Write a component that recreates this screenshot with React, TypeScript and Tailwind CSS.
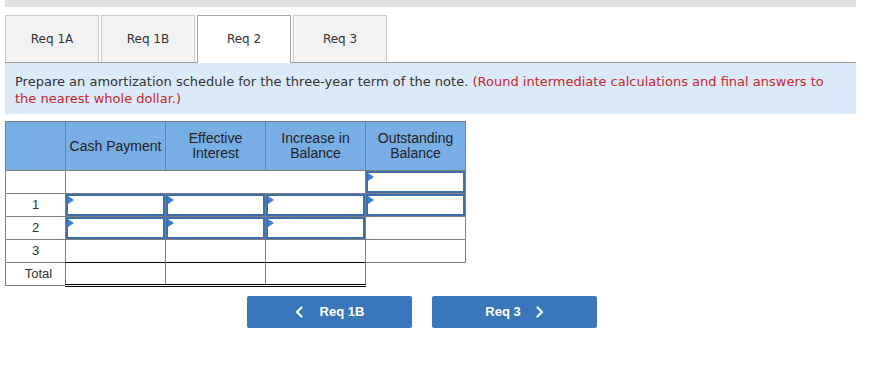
import React from "react";

const tabs = ["Req 1A", "Req 1B", "Req 2", "Req 3"];
const active = "Req 2";

// small blue marker in the corner of an entry cell
const Marker = () => (
  <span className="absolute left-0 top-0 h-0 w-0 border-y-[4px] border-l-[6px] border-y-transparent border-l-[#3b7fd6]" />
);

const InputCell = () => (
  <td className="h-[23px] border border-[#808080] p-0">
    <div className="relative h-[22px] border-2 border-[#3f6ea8] bg-white">
      <Marker />
    </div>
  </td>
);

const EmptyCell = ({ cls = "" }: { cls?: string }) => (
  <td className={`h-[23px] border border-[#808080] p-0 ${cls}`} />
);

const NumCell = ({ children, cls = "" }: { children: React.ReactNode; cls?: string }) => (
  <td className={`h-[23px] border border-[#808080] p-0 text-center text-[13px] text-[#333] ${cls}`}>{children}</td>
);

const Chevron = ({ dir }: { dir: "left" | "right" }) => (
  <svg width="8" height="12" viewBox="0 0 8 12" fill="none">
    <polyline
      points={dir === "left" ? "6.5,1.5 2,6 6.5,10.5" : "1.5,1.5 6,6 1.5,10.5"}
      stroke="white"
      strokeWidth="2.2"
      strokeLinecap="round"
      strokeLinejoin="round"
    />
  </svg>
);

export default function App() {
  return (
    <div className="min-h-screen w-full bg-white pl-[5px]">
      {/* top strip */}
      <div className="h-[7px] w-[851px] bg-[#e0e0e0]" />

      {/* tabs */}
      <div className="mt-[8px] flex w-[851px] gap-[2px] border-b border-[#9a9a9a] font-['DejaVu_Sans',Verdana,sans-serif] text-[12px] text-[#333]">
        {tabs.map((t) =>
          t === active ? (
            <div
              key={t}
              className="-mb-px flex h-[48px] w-[94px] items-center justify-center border border-b-0 border-[#a8a8a8] bg-white pb-[1px]"
            >
              {t}
            </div>
          ) : (
            <div
              key={t}
              className="flex h-[47px] w-[94px] items-center justify-center border border-b-0 border-[#cccccc] bg-[#f2f2f2]"
            >
              {t}
            </div>
          )
        )}
      </div>

      {/* instructions */}
      <div className="w-[851px] bg-[#dbeaf8] pb-[7px] pl-[10px] pr-[10px] pt-[10px] font-['DejaVu_Sans',Verdana,sans-serif] text-[13px] leading-[17px] text-[#333]">
        Prepare an amortization schedule for the three-year term of the note.{" "}
        <span className="text-[#c9262e]">
          (Round intermediate calculations and final answers to
          <br />
          the nearest whole dollar.)
        </span>
      </div>

      {/* schedule */}
      <table className="mt-[7px] w-[460px] table-fixed border-collapse font-['Liberation_Sans',Arial,sans-serif]">
        <colgroup>
          <col className="w-[60px]" />
          <col className="w-[100px]" />
          <col className="w-[100px]" />
          <col className="w-[100px]" />
          <col className="w-[100px]" />
        </colgroup>
        <thead>
          <tr className="h-[49px] bg-[#77aee4] text-[14px] leading-[15px] text-[#222]">
            <th className="border border-[#808080] font-normal" />
            <th className="border border-[#808080] font-normal">Cash Payment</th>
            <th className="border border-[#808080] font-normal">
              Effective
              <br />
              Interest
            </th>
            <th className="border border-[#808080] font-normal">
              Increase in
              <br />
              Balance
            </th>
            <th className="border border-[#808080] font-normal">
              Outstanding
              <br />
              Balance
            </th>
          </tr>
        </thead>
        <tbody>
          <tr>
            <EmptyCell />
            <td colSpan={3} className="h-[23px] border border-[#808080] p-0" />
            <InputCell />
          </tr>
          <tr>
            <NumCell>1</NumCell>
            <InputCell />
            <InputCell />
            <InputCell />
            <InputCell />
          </tr>
          <tr>
            <NumCell>2</NumCell>
            <InputCell />
            <InputCell />
            <InputCell />
            <EmptyCell />
          </tr>
          <tr>
            <NumCell>3</NumCell>
            <EmptyCell cls="border-b-black" />
            <EmptyCell cls="border-b-black" />
            <EmptyCell cls="border-b-black" />
            <EmptyCell />
          </tr>
          <tr>
            <NumCell cls="pl-[6px]">Total</NumCell>
            <EmptyCell cls="border-t-black border-b-[3px] border-b-black border-double" />
            <EmptyCell cls="border-t-black border-b-[3px] border-b-black border-double" />
            <EmptyCell cls="border-t-black border-b-[3px] border-b-black border-double" />
          </tr>
        </tbody>
      </table>

      {/* navigation */}
      <div className="ml-[242px] mt-[9px] flex gap-[20px] font-['Liberation_Sans',Arial,sans-serif] text-[13px] font-bold text-white">
        <button className="flex h-[32px] w-[165px] items-center justify-center gap-[17px] rounded-[2px] bg-[#3a76ba]">
          <Chevron dir="left" />
          <span>Req 1B</span>
        </button>
        <button className="flex h-[32px] w-[165px] items-center justify-center gap-[15px] rounded-[2px] bg-[#3a76ba]">
          <span>Req 3</span>
          <Chevron dir="right" />
        </button>
      </div>
    </div>
  );
}
